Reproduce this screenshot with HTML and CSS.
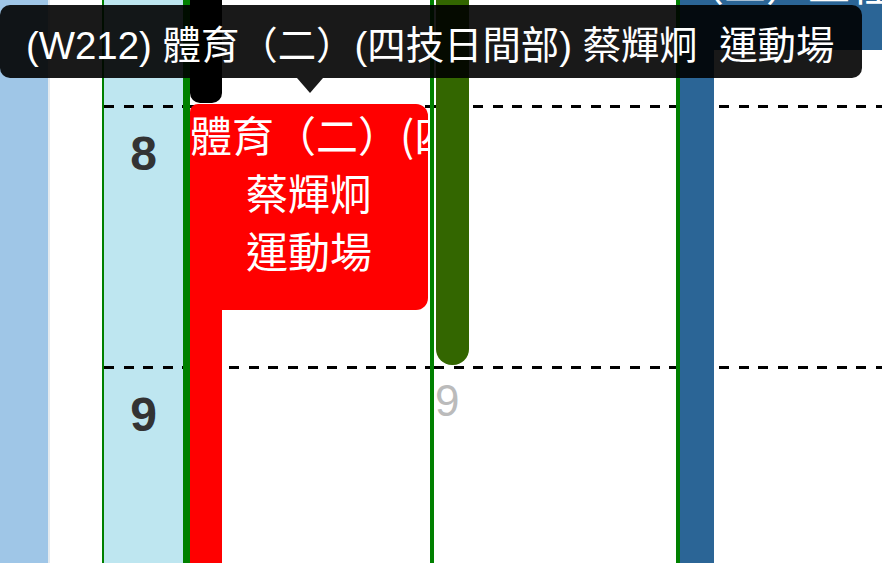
FILE: index.html
```html
<!DOCTYPE html>
<html lang="zh-Hant">
<head>
<meta charset="utf-8">
<title>課表</title>
<link rel="stylesheet" href="styles.css">
</head>
<body>
<div class="cal">
  <div class="side"></div>
  <div class="gutter"></div>
  <div class="col hours">
    <div class="slot pre"></div>
    <div class="slot"><span class="hlabel">8</span></div>
    <div class="slot"><span class="hlabel">9</span></div>
  </div>
  <div class="col day d1">
    <div class="slot pre"></div>
    <div class="slot"></div>
    <div class="slot"></div>
    <div class="bar bar-black"></div>
    <div class="ev ev-red">
      <div class="ev-box">體育（二）(四技日間部)<br>蔡輝炯<br>運動場</div>
      <div class="ev-tail"></div>
    </div>
  </div>
  <div class="col day d2">
    <div class="slot pre"></div>
    <div class="slot"></div>
    <div class="slot"><span class="dlabel">9</span></div>
    <div class="bar bar-green"></div>
  </div>
  <div class="col day d3">
    <div class="slot pre"></div>
    <div class="slot"></div>
    <div class="slot"></div>
    <div class="bar bar-blue"></div>
    <div class="ev-blue"><span class="ev-blue-text">（二）工程</span></div>
  </div>
</div>
<div class="tooltip">(W212) 體育（二）(四技日間部) 蔡輝炯&nbsp; 運動場</div>
</body>
</html>
```
FILE: styles.css
```css
html, body {
  margin: 0;
  padding: 0;
}
body {
  width: 882px;
  height: 563px;
  overflow: hidden;
  position: relative;
  background: #fff;
  font-family: "Liberation Sans", "Noto Sans CJK TC", sans-serif;
}
.cal {
  display: flex;
  height: 563px;
  overflow: hidden;
}
.side {
  flex: 0 0 48px;
  background: #9fc6e7;
  border-right: 2px solid #e4eaef;
}
.gutter {
  flex: 0 0 52px;
  background: #fff;
}
.col {
  display: flex;
  flex-direction: column;
  position: relative;
}
.hours {
  flex: 0 0 79px;
  background: #bee6f0;
  border-left: 2px solid #008000;
  border-right: 3px solid #008000;
}
.day {
  background: #fff;
  border-left: 4px solid #008000;
}
.d1 { flex: 0 0 240px; }
.d2 { flex: 0 0 242px; }
.d3 { flex: 1 1 auto; }
.slot {
  flex: 0 0 261px;
  background: repeating-linear-gradient(90deg, #000 0 10px, transparent 10px 19.6px) 0 0 / 100% 3px no-repeat;
}
.slot.pre {
  flex: 0 0 105px;
  background: none;
}
.hlabel {
  display: block;
  padding-top: 25px;
  text-align: center;
  font: bold 48px/48px "Liberation Sans", sans-serif;
  color: #333;
}
.dlabel {
  display: block;
  padding: 13px 0 0 1px;
  font: 44px/44px "Liberation Sans", sans-serif;
  color: #bbb;
}
.bar {
  position: absolute;
  top: 0;
}
.bar-black {
  left: 0;
  width: 32px;
  height: 103px;
  background: #000;
  border-radius: 0 0 10px 10px;
}
.bar-green {
  left: 2px;
  width: 33px;
  height: 365px;
  background: #336600;
  border-radius: 0 0 16px 16px;
}
.bar-blue {
  left: 0;
  width: 34px;
  bottom: 0;
  background: #2b6596;
}
.ev {
  position: absolute;
  left: 0;
  top: 105px;
  bottom: 0;
  width: 238px;
  display: flex;
  flex-direction: column;
}
.ev-box {
  flex: 0 0 205px;
  background: #ff0000;
  border-radius: 8px 12px 12px 0;
  color: #fff;
  font: 42px/58px "Noto Sans CJK TC", sans-serif;
  text-align: center;
  white-space: nowrap;
  overflow: hidden;
  margin-top: -1px;
  padding-top: 1px;
}
.ev-tail {
  flex: 1 1 auto;
  width: 32px;
  background: #ff0000;
}
.ev-blue {
  position: absolute;
  left: 0;
  top: 0;
  width: 240px;
  height: 50px;
  background: #2b6596;
  border-radius: 0 0 12px 0;
  overflow: hidden;
}
.ev-blue-text {
  display: block;
  margin-top: -46px;
  padding-left: 2px;
  color: #fff;
  font: 42px/58px "Noto Sans CJK TC", sans-serif;
  white-space: nowrap;
}
.tooltip {
  position: absolute;
  left: 0;
  top: 5px;
  width: 862px;
  height: 73px;
  box-sizing: border-box;
  padding-left: 26px;
  display: flex;
  align-items: center;
  background: rgba(0, 0, 0, 0.9);
  border-radius: 10px;
  color: #fff;
  font-size: 38.4px;
  white-space: nowrap;
}
.tooltip::after {
  content: "";
  position: absolute;
  left: 297px;
  top: 100%;
  border-left: 13px solid transparent;
  border-right: 13px solid transparent;
  border-top: 15px solid rgba(0, 0, 0, 0.9);
}
```
